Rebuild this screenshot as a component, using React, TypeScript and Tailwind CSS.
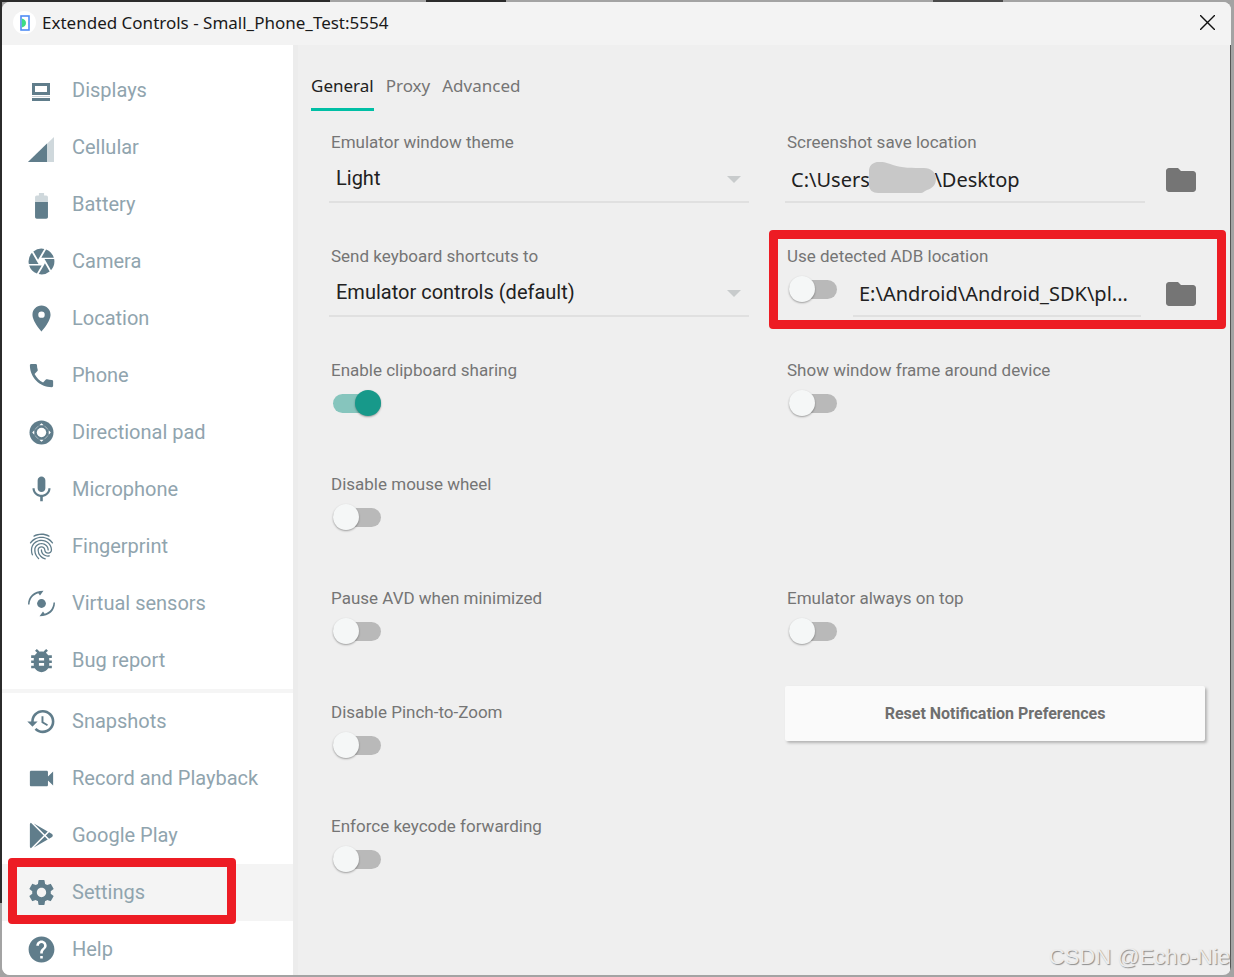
import React, { useState } from 'react';
import {
  MdBugReport,
  MdCamera,
  MdFingerprint,
  MdFolder,
  MdHelp,
  MdHistory,
  MdLocationOn,
  MdMic,
  MdPhone,
  MdSettings,
  MdVideocam,
} from 'react-icons/md';
import { clsx } from 'clsx';

type IconProps = { className?: string };

const DisplaysIcon = ({ className }: IconProps) => (
  <svg viewBox="0 0 31 31" fill="currentColor" className={className}>
    <path fillRule="evenodd" d="M6 8h18v12H6zM9 11v6h12v-6z" />
    <path d="M6 21h18v1H6z" opacity=".35" />
    <path d="M6 23h18v3H6z" />
  </svg>
);

const CellularIcon = ({ className }: IconProps) => (
  <svg viewBox="0 0 31 31" fill="currentColor" className={className}>
    <path d="M2 30 28 5v25z" opacity=".3" />
    <path d="M2 30 21 11.5v18.5z" />
  </svg>
);

const BatteryIcon = ({ className }: IconProps) => (
  <svg viewBox="0 0 24 24" fill="currentColor" className={className}>
    <path d="M17 6.33C17 5.6 16.4 5 15.67 5H14V3h-4v2H8.33C7.6 5 7 5.6 7 6.33V10h10V6.33z" opacity=".3" />
    <path d="M7 10v11.67C7 22.4 7.6 23 8.33 23h7.33c.74 0 1.34-.6 1.34-1.33V10H7z" />
  </svg>
);

const DpadIcon = ({ className }: IconProps) => (
  <svg viewBox="-15.5 -15.5 31 31" className={className}>
    <circle r="12" fill="currentColor" />
    <circle r="4.7" fill="#fff" />
    <g fill="none" stroke="#fff" strokeWidth="1" opacity=".45">
      <path d="M-6.3-3A7 7 0 0 1-3-6.3M3-6.3A7 7 0 0 1 6.3-3M6.3 3A7 7 0 0 1 3 6.3M-3 6.3A7 7 0 0 1-6.3 3" />
    </g>
    <path d="M0-9.3 2.2-7.2h-4.4zM0 9.3 2.2 7.2h-4.4zM-9.3 0-7.2-2.2v4.4zM9.3 0 7.2-2.2v4.4z" fill="#fff" />
  </svg>
);

const SensorsIcon = ({ className }: IconProps) => (
  <svg viewBox="-15.5 -15.5 31 31" fill="currentColor" className={className}>
    <circle r="4.4" />
    <path d="M-13.5 1C-13.5-7-8-12.8 2-12.8L-1.5-8-3.2-10.2C-8.5-8.5-11.5-5-12 1z" />
    <path d="M13.5-1C13.5 7 8 12.8-2 12.8L1.5 8 3.2 10.2C8.5 8.5 11.5 5 12-1z" />
  </svg>
);

const PlayIcon = ({ className }: IconProps) => (
  <svg viewBox="0 0 24 24" fill="currentColor" className={className}>
    <path d="M3 20.5v-17c0-.59.34-1.11.84-1.35L13.69 12l-9.85 9.85c-.5-.25-.84-.76-.84-1.35m13.81-5.38L6.05 21.34l8.49-8.49 2.27 2.27m3.35-4.31c.34.27.59.69.59 1.19s-.22.9-.57 1.18L17.89 14.5l-2.5-2.5 2.5-2.5 2.27 1.31M6.05 2.66l10.76 6.22-2.27 2.27-8.49-8.49z" />
  </svg>
);

const deviceItems = [
  { name: 'Displays', icon: DisplaysIcon },
  { name: 'Cellular', icon: CellularIcon },
  { name: 'Battery', icon: BatteryIcon },
  { name: 'Camera', icon: MdCamera },
  { name: 'Location', icon: MdLocationOn },
  { name: 'Phone', icon: MdPhone },
  { name: 'Directional pad', icon: DpadIcon },
  { name: 'Microphone', icon: MdMic },
  { name: 'Fingerprint', icon: MdFingerprint },
  { name: 'Virtual sensors', icon: SensorsIcon },
  { name: 'Bug report', icon: MdBugReport },
];

const toolItems = [
  { name: 'Snapshots', icon: MdHistory },
  { name: 'Record and Playback', icon: MdVideocam },
  { name: 'Google Play', icon: PlayIcon },
  { name: 'Settings', icon: MdSettings },
  { name: 'Help', icon: MdHelp },
];

interface NavItemProps {
  name: string;
  icon: React.ComponentType<IconProps>;
  active: boolean;
  onSelect: () => void;
}

const NavItem: React.FC<NavItemProps> = ({ name, icon: Icon, active, onSelect }) => (
  <li className="relative">
    <button
      onClick={onSelect}
      className={clsx(
        'flex h-[57px] w-full items-center gap-[15px] pl-6 text-left text-xl text-[#90a4ae]',
        active && 'bg-[#f4f4f4]'
      )}
    >
      <Icon className="size-[31px] shrink-0 text-[#607d8b]" />
      <span className="pb-0.5">{name}</span>
    </button>
    {name === 'Settings' && (
      <div className="pointer-events-none absolute -top-1.5 -bottom-[3px] left-1.5 w-[228px] rounded border-[9px] border-[#ed1c24]" />
    )}
  </li>
);

interface SwitchProps {
  id: string;
  defaultChecked?: boolean;
}

const Switch: React.FC<SwitchProps> = ({ id, defaultChecked }) => (
  <input
    id={id}
    type="checkbox"
    role="switch"
    defaultChecked={defaultChecked}
    className={clsx(
      'relative mt-1 ml-1 flex h-[30px] w-12 shrink-0 appearance-none items-center',
      'before:h-[19px] before:w-full before:rounded-full before:bg-[#b9b9b9]',
      'after:absolute after:left-0 after:size-[26px] after:rounded-full after:bg-[#f5f7f7] after:shadow-[0_1px_2px_rgba(0,0,0,0.35)]',
      'checked:before:bg-[#86c5bd] checked:after:right-0 checked:after:left-auto checked:after:bg-[#17998a]'
    )}
  />
);

interface FieldProps {
  id: string;
  label: string;
  children: React.ReactNode;
}

const Field: React.FC<FieldProps> = ({ id, label, children }) => (
  <div className="relative pt-3">
    <label htmlFor={id} className="block pl-0.5 text-[17px] leading-7 text-[#757575]">
      {label}
    </label>
    {children}
  </div>
);

const SelectBox: React.FC<{ id: string; options: string[] }> = ({ id, options }) => (
  <div className="relative">
    <select
      id={id}
      className="h-[47px] w-full appearance-none border-b-2 border-[#e0e0e0] pb-px pl-[7px] text-xl text-[#212121] outline-none"
    >
      {options.map((option) => (
        <option key={option}>{option}</option>
      ))}
    </select>
    <svg viewBox="0 0 14 7" className="pointer-events-none absolute top-5 right-2 h-[7px] w-3.5 fill-[#c8cbcc]">
      <path d="M0 0h14L7 7z" />
    </svg>
  </div>
);

const BrowseButton: React.FC<{ label: string }> = ({ label }) => (
  <button aria-label={label} className="flex w-[60px] shrink-0 items-center justify-end pt-px pr-1.5">
    <MdFolder className="size-9 text-[#757575]" />
  </button>
);

const pathInput =
  'h-[47px] w-full min-w-0 flex-1 border-b-2 border-[#e0e0e0] pt-px pl-1.5 font-["Noto_Sans",sans-serif] text-xl text-[#212121] text-ellipsis outline-none';

const tabs = ['General', 'Proxy', 'Advanced'];

export default function App() {
  const [page, setPage] = useState('Settings');
  const [tab, setTab] = useState('General');

  return (
    <div className="relative flex h-screen overflow-hidden bg-[#a3a3a3] p-0.5 pr-[3px] font-[Roboto,sans-serif]">
      {/* Desktop showing round the window */}
      <div className="absolute top-0 left-0 h-0.5 w-[330px] bg-[#2b2b2b]" />
      <div className="absolute top-0 left-[426px] h-0.5 w-20 bg-[#2b2b2b]" />
      <div className="absolute top-0 right-[231px] h-0.5 w-[70px] bg-[#4a4a4a]" />
      <div className="absolute top-0 left-0 h-[903px] w-0.5 bg-[#2b2b2b]" />

      <div className="relative flex min-w-0 flex-1 flex-col overflow-hidden rounded-lg bg-[#efefef]">
        <header className="flex h-[43px] shrink-0 items-center bg-[#f3f3f3] pr-4 pb-0.5 pl-[11px]">
          <span className="flex size-[23px] items-center justify-center rounded-full bg-white">
            <svg viewBox="0 0 10 16" className="h-4 w-2.5">
              <rect x="1" y="1" width="8" height="14" fill="#fff" stroke="#4f8df5" strokeWidth="1.6" />
              <path d="M1.8 3.5c3 .5 4.2 2.5 4.2 4.5s-1.2 4-4.2 4.5z" fill="#3ddc84" />
            </svg>
          </span>
          <h1 className="flex-1 pl-1.5 font-['Noto_Sans',sans-serif] text-[17px] text-[#1a1a1a]">
            Extended Controls - Small_Phone_Test:5554
          </h1>
          <button aria-label="Close">
            <svg viewBox="0 0 15 15" className="size-[15px] stroke-[#111]" strokeWidth="1.4">
              <path d="M0 0 15 15M15 0 0 15" />
            </svg>
          </button>
        </header>

        <div className="flex min-h-0 flex-1">
          <nav className="w-[291px] shrink-0 overflow-hidden bg-white pt-[17px]">
            <ul>
              {deviceItems.map((item) => (
                <NavItem key={item.name} {...item} active={page === item.name} onSelect={() => setPage(item.name)} />
              ))}
            </ul>
            <ul className="border-t-4 border-[#f5f5f5]">
              {toolItems.map((item) => (
                <NavItem key={item.name} {...item} active={page === item.name} onSelect={() => setPage(item.name)} />
              ))}
            </ul>
          </nav>

          <main className="min-w-0 flex-1 border-r border-[#555] shadow-[inset_5px_0_0_#ececec]">
            <div role="tablist" className="flex gap-3 pt-[22px] pl-[18px] font-['Noto_Sans',sans-serif] text-[17px]">
              {tabs.map((name) => (
                <button
                  key={name}
                  role="tab"
                  aria-selected={tab === name}
                  onClick={() => setTab(name)}
                  className={clsx(
                    'h-11 border-b-[3px] pb-1',
                    tab === name ? 'border-[#00bfa5] text-[#212121]' : 'border-transparent text-[#757575]'
                  )}
                >
                  {name}
                </button>
              ))}
            </div>

            <div className="mt-[5px] grid auto-rows-[114px] grid-cols-2 items-start gap-x-9 pr-[25px] pl-9">
              <Field id="theme" label="Emulator window theme">
                <SelectBox id="theme" options={['Light', 'Dark']} />
              </Field>
              <Field id="save-location" label="Screenshot save location">
                <div className="relative flex">
                  <input id="save-location" className={pathInput} defaultValue={'C:\\Users\\           \\Desktop'} />
                  <BrowseButton label="Choose screenshot folder" />
                  <svg viewBox="0 0 68 32" className="absolute top-1.5 left-[84px] h-8 w-[68px] fill-[#c8c8c8]">
                    <path d="M8 0C3 1 0 4 0 9v14c0 5 4 8 9 8h43c2 0 3-2 6-3 6-2 9-6 9-11 0-7-5-11-12-11-12 0-22 0-31-3C18 1 13-1 8 0z" />
                  </svg>
                </div>
              </Field>

              <Field id="shortcuts" label="Send keyboard shortcuts to">
                <SelectBox id="shortcuts" options={['Emulator controls (default)', 'Virtual device']} />
              </Field>
              <Field id="adb" label="Use detected ADB location">
                <div className="flex">
                  <Switch id="adb" />
                  <div className="mr-1 ml-4 flex min-w-0 flex-1">
                    <input
                      aria-label="ADB location"
                      className={pathInput}
                      defaultValue="E:\Android\Android_SDK\pl..."
                    />
                  </div>
                  <BrowseButton label="Choose ADB folder" />
                </div>
                <div className="pointer-events-none absolute top-0 -right-[21px] -left-4 h-[99px] rounded border-[9px] border-[#ed1c24]" />
              </Field>

              <Field id="clipboard" label="Enable clipboard sharing">
                <Switch id="clipboard" defaultChecked />
              </Field>
              <Field id="frame" label="Show window frame around device">
                <Switch id="frame" />
              </Field>

              <Field id="wheel" label="Disable mouse wheel">
                <Switch id="wheel" />
              </Field>

              <div className="col-start-1">
                <Field id="pause" label="Pause AVD when minimized">
                  <Switch id="pause" />
                </Field>
              </div>
              <Field id="on-top" label="Emulator always on top">
                <Switch id="on-top" />
              </Field>

              <Field id="pinch" label="Disable Pinch-to-Zoom">
                <Switch id="pinch" />
              </Field>
              <button className="h-[55px] rounded-xs bg-[#fafafa] text-base font-bold text-[#6f6f6f] shadow-[2px_2px_3px_rgba(0,0,0,0.25)]">
                Reset Notification Preferences
              </button>

              <Field id="keycode" label="Enforce keycode forwarding">
                <Switch id="keycode" />
              </Field>
            </div>
          </main>
        </div>
      </div>

      <div className="pointer-events-none absolute right-1 bottom-1 font-['Liberation_Sans',sans-serif] text-[22px] text-[#ececec] [text-shadow:1px_1px_1px_#8c8c8c]">
        CSDN @Echo-Nie
      </div>
    </div>
  );
}
